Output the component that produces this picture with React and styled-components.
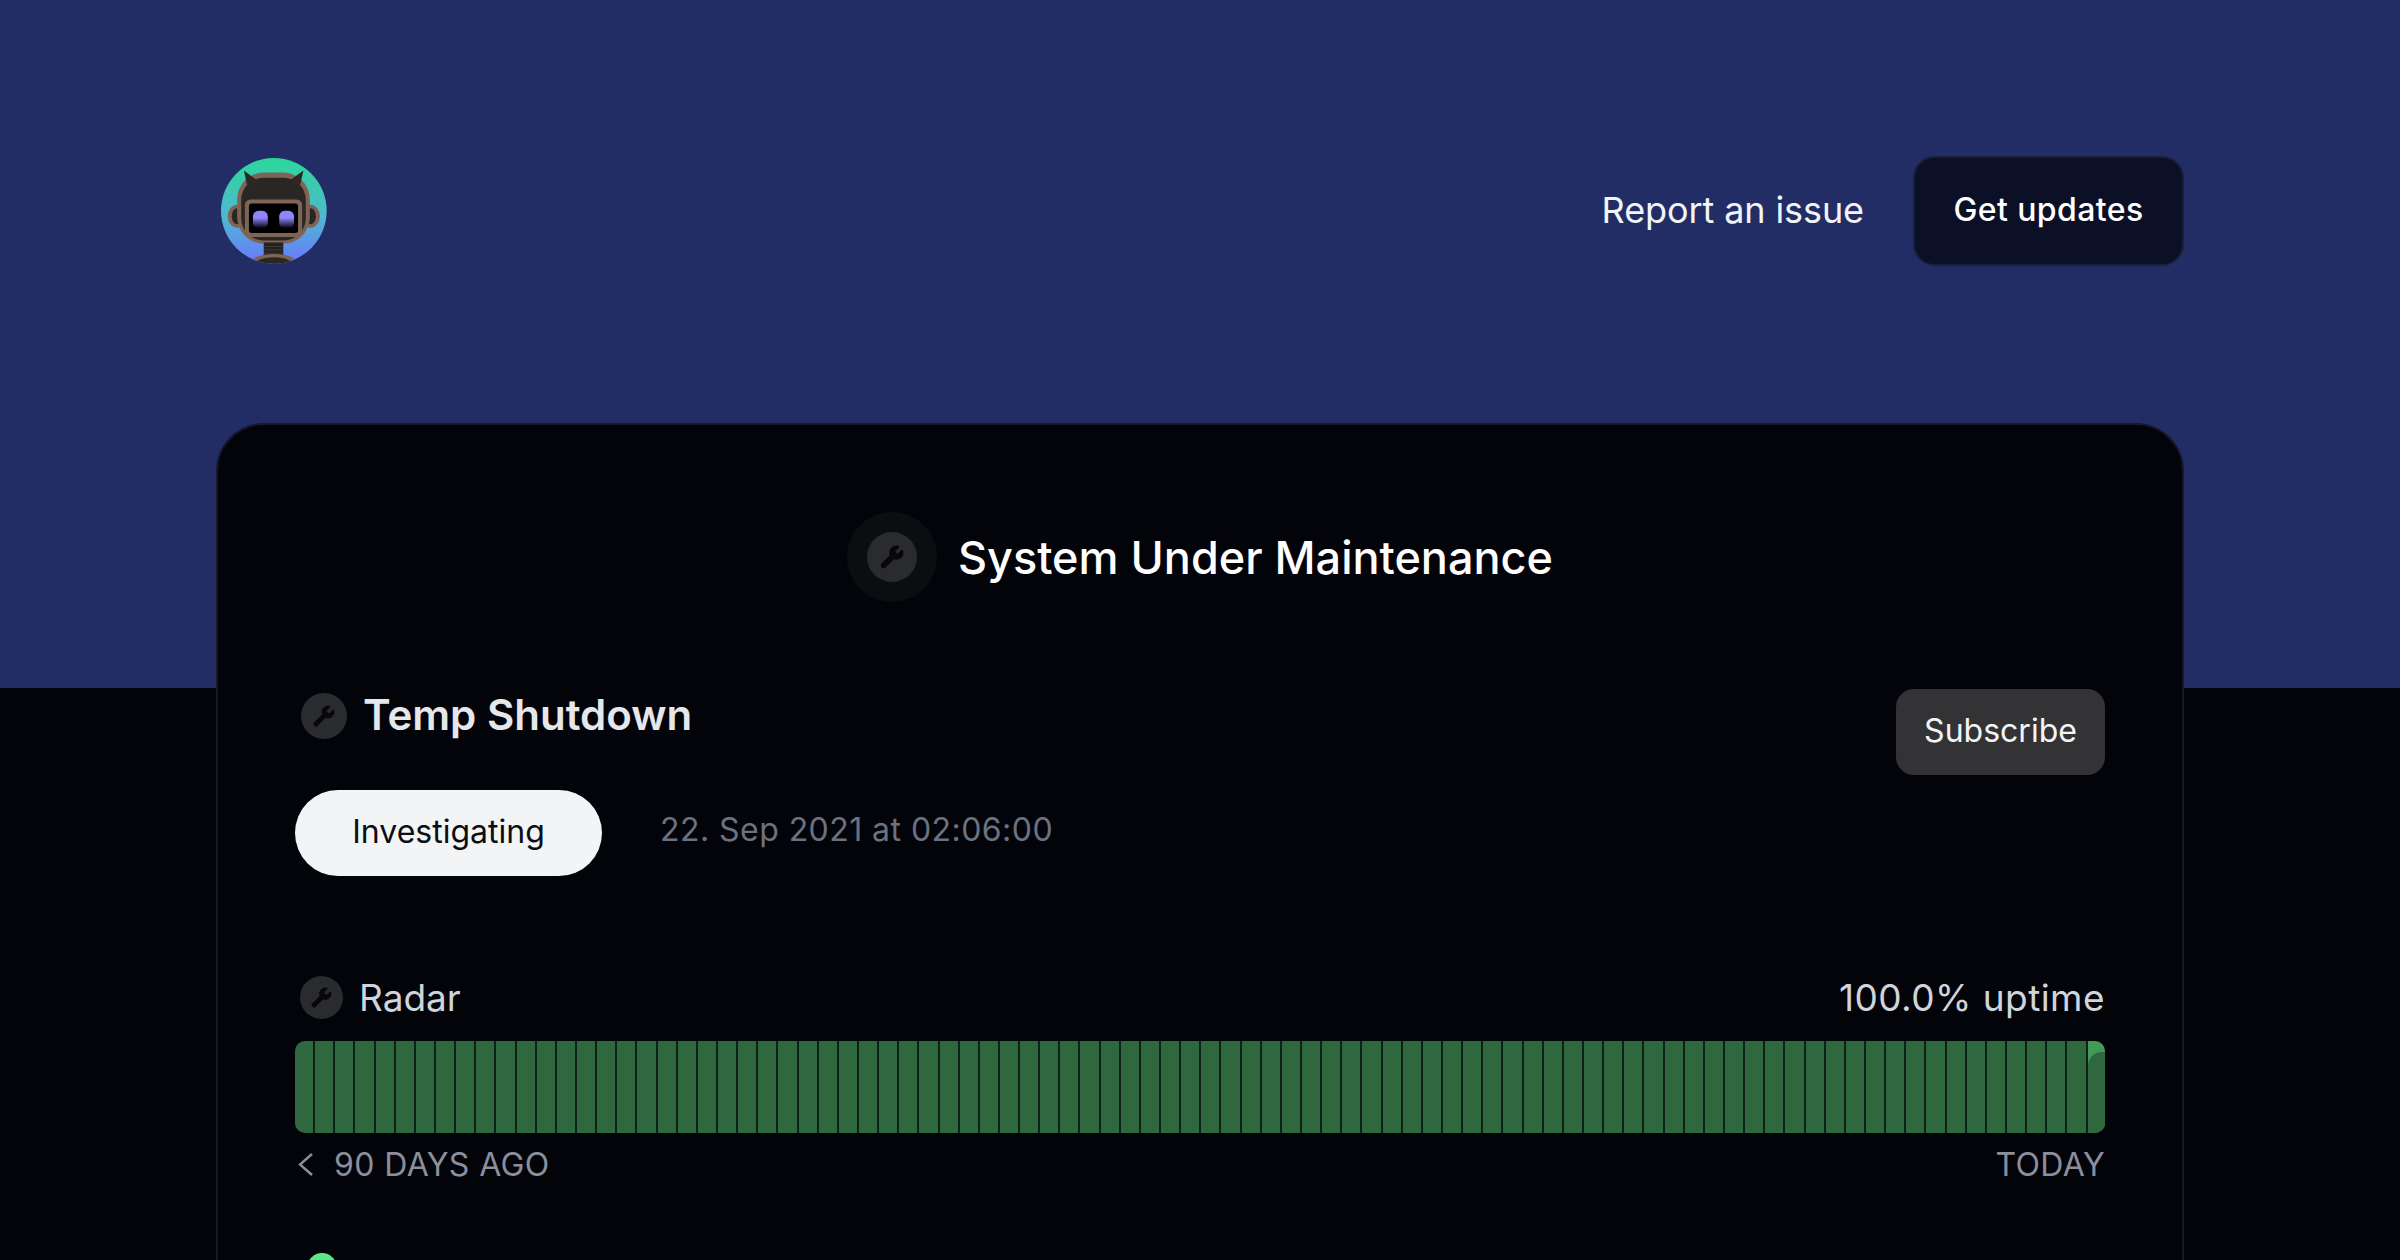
import React from "react";
import styled, { createGlobalStyle } from "styled-components";
import { Wrench } from "lucide-react";

const Global = createGlobalStyle`
    html, body {
        margin: 0;
        height: 1260px;
        overflow: hidden;
        background: #03040a;
    }
    * { box-sizing: border-box; }
`;

const Page = styled.div`
    height: 1260px;
    overflow: hidden;
    padding: 156px 216px 0 216px;
    font-family: Inter, "Liberation Sans", sans-serif;
    background: linear-gradient(#222d66 688px, #03040a 688px);
`;

const Header = styled.header`
    display: flex;
    align-items: center;
    height: 110px;
`;

const LogoWrap = styled.div`
    width: 106px;
    height: 106px;
    margin-left: 5px;
`;

const Report = styled.a`
    margin-left: auto;
    margin-right: 49px;
    margin-bottom: 3px;
    font-size: 36px;
    letter-spacing: -0.1px;
    color: #f3f4f6;
`;

const Updates = styled.button`
    width: 271px;
    height: 110px;
    border: 2px solid #191f38;
    border-radius: 22px;
    background: #0c1026;
    color: #fff;
    font: 500 32px Inter, sans-serif;
    letter-spacing: 0.4px;
    padding: 0 0 4px;
`;

const Card = styled.main`
    margin-top: 157px;
    min-height: 1000px;
    padding: 87px 77px 0;
    border: 2px solid #141a2c;
    border-radius: 48px;
    background: #03040a;
`;

const Banner = styled.div`
    display: flex;
    align-items: center;
    justify-content: center;
    gap: 21px;
    height: 90px;
`;

const Halo = styled.span`
    display: flex;
    align-items: center;
    justify-content: center;
    width: 90px;
    height: 90px;
    border-radius: 50%;
    background: #0c0d11;
`;

const IconDot = styled.span`
    display: flex;
    flex: none;
    align-items: center;
    justify-content: center;
    width: ${(props) => props.size}px;
    height: ${(props) => props.size}px;
    border-radius: 50%;
    background: #2a2b2e;
    color: #08080b;
`;

const TitleDot = styled(IconDot)`
    margin-top: 4px;
`;

const BannerText = styled.h1`
    margin: 0;
    font-size: 45px;
    font-weight: 500;
    color: #fff;
`;

const Incident = styled.section`
    display: flex;
    justify-content: space-between;
    margin-top: 87px;
`;

const IncidentTitle = styled.h2`
    display: flex;
    align-items: center;
    gap: 16px;
    margin: 0 0 0 6px;
    height: 50px;
    font-size: 42px;
    font-weight: 600;
    color: #e5e7eb;
`;

const Meta = styled.div`
    display: flex;
    align-items: center;
    gap: 58px;
    margin-top: 51px;
`;

const Pill = styled.span`
    display: flex;
    align-items: center;
    justify-content: center;
    width: 307px;
    height: 86px;
    border-radius: 44px;
    background: #f3f4f6;
    color: #0b0d14;
    font-size: 32px;
    padding-bottom: 4px;
`;

const When = styled.span`
    margin-bottom: 8px;
    font-size: 32px;
    letter-spacing: 0.45px;
    color: #6b7280;
`;

const Subscribe = styled.button`
    width: 209px;
    height: 86px;
    border: 0;
    border-radius: 18px;
    background: #333336;
    color: #f3f4f6;
    font: 400 32px Inter, sans-serif;
    padding: 0 0 3px;
`;

const Component = styled.section`
    margin-top: 99px;
`;

const ComponentHead = styled.div`
    display: flex;
    align-items: center;
    justify-content: space-between;
    height: 44px;
    font-size: 37px;
    color: #d1d5db;
`;

const ComponentName = styled.div`
    display: flex;
    align-items: center;
    gap: 16px;
    margin-left: 5px;
`;

const Uptime = styled.span`
    letter-spacing: 0.45px;
`;

const Bar = styled.div`
    display: flex;
    gap: 2px;
    height: 92px;
    margin-top: 22px;
    border-radius: 10px;
    overflow: hidden;
    background: #10211a;
`;

const Day = styled.div`
    flex: 1;
    background: ${(props) => (props.last ? "#439a56" : "#2f673f")};
`;

const DayShade = styled.div`
    height: calc(100% - 11px);
    margin-top: 11px;
    border-radius: 14px 0 0 0;
    background: #2f673f;
`;

const Axis = styled.div`
    display: flex;
    align-items: center;
    justify-content: space-between;
    margin-top: 12px;
    font-size: 32px;
    letter-spacing: 0.4px;
    color: #8b8f9c;
`;

const AxisStart = styled.span`
    display: flex;
    align-items: center;
    gap: 20px;
    margin-left: 2px;
`;

const NextDot = styled.div`
    width: 30px;
    height: 30px;
    margin: 69px 0 0 12px;
    border-radius: 50%;
    background: #5fe58a;
`;

const days = Array.from({ length: 90 }, (_, i) => i);

function Logo() {
    return (
        <svg viewBox="65 55 315 315" width="106" height="106">
            <defs>
                <linearGradient id="sky" x1="0" y1="0" x2="0" y2="1">
                    <stop offset="0" stopColor="#2bd89a" />
                    <stop offset="0.55" stopColor="#4fb8cf" />
                    <stop offset="1" stopColor="#6a78ff" />
                </linearGradient>
                <linearGradient id="eye" x1="0" y1="0" x2="0" y2="1">
                    <stop offset="0.4" stopColor="#8f86ff" />
                    <stop offset="1" stopColor="#000" />
                </linearGradient>
                <clipPath id="round">
                    <circle cx="222" cy="212" r="157" />
                </clipPath>
            </defs>
            <g clipPath="url(#round)">
                <rect x="65" y="55" width="315" height="315" fill="url(#sky)" />
                <ellipse cx="113" cy="228" rx="28" ry="34" fill="#7d6455" />
                <ellipse cx="331" cy="228" rx="28" ry="34" fill="#7d6455" />
                <ellipse cx="113" cy="228" rx="16" ry="24" fill="#2a2624" />
                <ellipse cx="331" cy="228" rx="16" ry="24" fill="#2a2624" />
                <rect x="113" y="98" width="216" height="212" rx="80" fill="#7d6455" />
                <rect x="125" y="114" width="192" height="186" rx="66" fill="#2a2624" />
                <path d="M133 92 L176 124 L150 170 Z" fill="#2c2725" />
                <path d="M310 92 L266 124 L292 170 Z" fill="#2c2725" />
                <rect x="136" y="178" width="170" height="112" rx="16" fill="#7d6455" />
                <rect x="148" y="190" width="146" height="88" rx="8" fill="#000" />
                <rect x="160" y="212" width="44" height="52" rx="16" fill="url(#eye)" />
                <rect x="238" y="212" width="44" height="52" rx="16" fill="url(#eye)" />
                <rect x="192" y="306" width="58" height="42" fill="#242120" />
                <path d="M192 318 H250 M192 328 H250 M192 338 H250" stroke="#4a4440" strokeWidth="2" />
                <ellipse cx="222" cy="374" rx="76" ry="34" fill="#7d6455" />
                <ellipse cx="222" cy="382" rx="66" ry="32" fill="#2a2624" />
            </g>
        </svg>
    );
}

function Tool({ size }) {
    return <Wrench size={size} fill="currentColor" strokeWidth={1} />;
}

function Back() {
    return (
        <svg width="17" height="25" viewBox="0 0 17 25" fill="none">
            <path d="M15 2 L3 12.5 L15 23" stroke="#8b8f9c" strokeWidth="2.4" />
        </svg>
    );
}

function App() {
    return (
        <>
            <Global />
            <Page>
                <Header>
                    <LogoWrap>
                        <Logo />
                    </LogoWrap>
                    <Report>Report an issue</Report>
                    <Updates>Get updates</Updates>
                </Header>
                <Card>
                    <Banner>
                        <Halo>
                            <IconDot size={50}>
                                <Tool size={26} />
                            </IconDot>
                        </Halo>
                        <BannerText>System Under Maintenance</BannerText>
                    </Banner>
                    <Incident>
                        <div>
                            <IncidentTitle>
                                <TitleDot size={46}>
                                    <Tool size={24} />
                                </TitleDot>
                                Temp Shutdown
                            </IncidentTitle>
                            <Meta>
                                <Pill>Investigating</Pill>
                                <When>22. Sep 2021 at 02:06:00</When>
                            </Meta>
                        </div>
                        <Subscribe>Subscribe</Subscribe>
                    </Incident>
                    <Component>
                        <ComponentHead>
                            <ComponentName>
                                <IconDot size={43}>
                                    <Tool size={23} />
                                </IconDot>
                                Radar
                            </ComponentName>
                            <Uptime>100.0% uptime</Uptime>
                        </ComponentHead>
                        <Bar>
                            {days.map((d) => (
                                <Day key={d} last={d === 89}>
                                    {d === 89 && <DayShade />}
                                </Day>
                            ))}
                        </Bar>
                        <Axis>
                            <AxisStart>
                                <Back />
                                90 DAYS AGO
                            </AxisStart>
                            <span>TODAY</span>
                        </Axis>
                    </Component>
                    <NextDot />
                </Card>
            </Page>
        </>
    );
}

export default App;
